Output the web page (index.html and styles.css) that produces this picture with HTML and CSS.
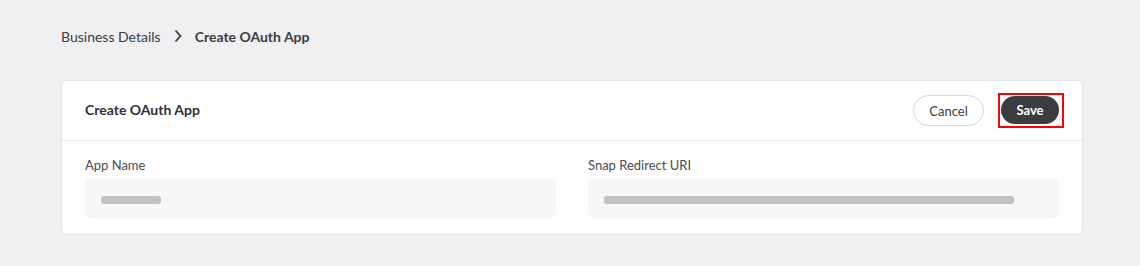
FILE: index.html
```html
<!DOCTYPE html>
<html lang="en">
<head>
    <meta charset="UTF-8">
    <title>Create OAuth App</title>
    <link rel="stylesheet" href="styles.css">
</head>
<body>
    <div class="breadcrumb">
        <span class="crumb">Business Details</span>
        <svg class="chevron" width="10" height="14" viewBox="0 0 10 14"><path d="M2.5 1.5 L7.5 7 L2.5 12.5" fill="none" stroke="#3a3d40" stroke-width="1.8"/></svg>
        <span class="crumb current">Create OAuth App</span>
    </div>

    <div class="card">
        <div class="card-header">
            <h2 class="card-title">Create OAuth App</h2>
            <div class="actions">
                <button class="btn-cancel">Cancel</button>
                <div class="highlight">
                    <button class="btn-save">Save</button>
                </div>
            </div>
        </div>
        <div class="card-body">
            <div class="field">
                <label>App Name</label>
                <div class="input"><span class="redacted short"></span></div>
            </div>
            <div class="field">
                <label>Snap Redirect URI</label>
                <div class="input"><span class="redacted long"></span></div>
            </div>
        </div>
    </div>
</body>
</html>
```

FILE: styles.css
```css
body {
    margin: 0;
    padding: 0 57px 0 61px;
    background-color: #f0f0f2;
    font-family: Lato, "Open Sans", sans-serif;
    color: #3a3d40;
}

.breadcrumb {
    display: flex;
    align-items: center;
    height: 72px;
    font-size: 14px;
}

.chevron {
    margin: 0 12px 0 12px;
}

.crumb.current {
    font-weight: bold;
}

.card {
    background: #ffffff;
    border: 1px solid #e4e5e7;
    border-radius: 6px;
    margin-top: 8px;
}

.card-header {
    display: flex;
    justify-content: space-between;
    align-items: center;
    height: 59px;
    padding: 0 23px;
    border-bottom: 1px solid #e6e7e9;
}

.card-title {
    margin: 0 0 2px;
    font-size: 14px;
    font-weight: bold;
    color: #2f3236;
}

.actions {
    display: flex;
    align-items: center;
    gap: 14px;
}

.btn-cancel {
    height: 31px;
    width: 71px;
    border: 1px solid #d6d7d9;
    border-radius: 16px;
    background: #fff;
    font-family: inherit;
    font-size: 13px;
    color: #3a3d40;
    padding: 0;
}

.highlight {
    border: 2px solid #ff0000;
    padding: 1px 3px 2px 1px;
    margin-right: -5px;
}

.btn-save {
    display: block;
    height: 28px;
    width: 58px;
    border: none;
    border-radius: 14px;
    background: #3a3d40;
    color: #fff;
    font-family: inherit;
    font-size: 13px;
    font-weight: bold;
    padding: 0;
}

.card-body {
    display: grid;
    grid-template-columns: 1fr 1fr;
    gap: 32px;
    padding: 16px 23px 16px;
}

.field label {
    display: block;
    font-size: 13px;
    color: #4a4d50;
    margin-bottom: 5px;
}

.input {
    height: 40px;
    background: #f6f7f8;
    border-radius: 6px;
    display: flex;
    align-items: center;
    padding: 0 16px;
}

.redacted {
    display: block;
    height: 8px;
    background: #c2c2c2;
    border-radius: 3px;
    filter: blur(0.6px);
    margin-top: 3px;
}

.redacted.short {
    width: 60px;
}

.redacted.long {
    width: 410px;
}
```
